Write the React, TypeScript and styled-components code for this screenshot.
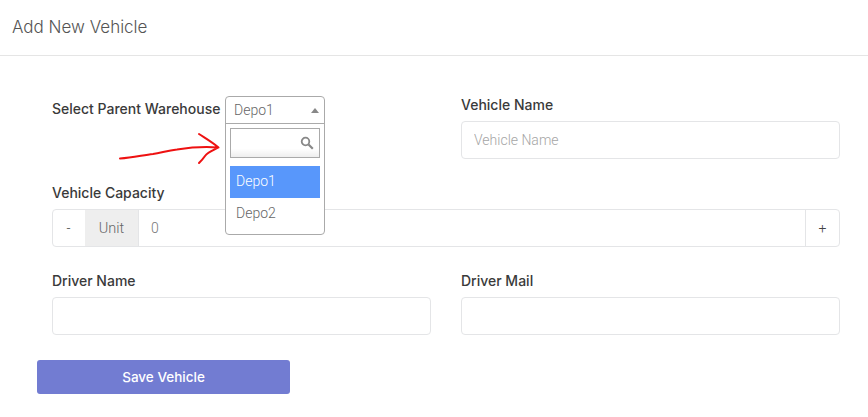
import React from 'react'
import styled, { createGlobalStyle } from 'styled-components'

const GlobalStyle = createGlobalStyle`
  html, body {
    margin: 0;
    padding: 0;
    background: #fff;
    font-family: Roboto, "Liberation Sans", sans-serif;
    color: #3a3a3a;
  }
`

const Page = styled.div`
  position: relative;
  width: 868px;
  height: 417px;
  overflow: hidden;
`

const Header = styled.header`
  height: 56px;
  box-sizing: border-box;
  border-bottom: 1px solid #e5e5e5;
  display: flex;
  align-items: center;
  padding: 0 0 2px 12px;
`

const Title = styled.h1`
  margin: 0;
  font-family: Inter, Roboto, sans-serif;
  font-size: 17px;
  font-weight: 300;
  color: #555;
`

const Form = styled.form`
  padding: 41px 28px 0 52px;
`

const Grid = styled.div`
  display: grid;
  grid-template-columns: 379px 379px;
  column-gap: 30px;
  row-gap: 26px;
`

const Field = styled.div<{ $wide?: boolean }>`
  display: flex;
  flex-direction: column;
  gap: 8px;
  ${({ $wide }) => ($wide ? 'grid-column: 1 / span 2;' : '')}
`

const InlineField = styled.div`
  display: flex;
  align-items: flex-start;
`

const Label = styled.label`
  display: block;
  font-family: Inter, Roboto, sans-serif;
  font-size: 14px;
  line-height: 16px;
  font-weight: 500;
  color: #3a3a3a;
`

const InlineLabel = styled(Label)`
  margin-top: 4px;
  width: 173px;
  white-space: nowrap;
`

const Input = styled.input`
  box-sizing: border-box;
  width: 100%;
  height: 38px;
  padding: 0 12px;
  border: 1px solid #e4e5e7;
  border-radius: 4px;
  background: #fff;
  font-family: Roboto, sans-serif;
  font-size: 14px;
  font-weight: 300;
  outline: none;

  &::placeholder {
    color: #a5a5a5;
    opacity: 1;
  }
`

const InputGroup = styled.div`
  display: flex;
  height: 38px;
  box-sizing: border-box;
  border: 1px solid #e4e5e7;
  border-radius: 4px;
  font-size: 14px;
`

const StepButton = styled.div<{ $end?: boolean }>`
  width: 33px;
  display: flex;
  align-items: center;
  justify-content: center;
  color: #444;
  font-weight: 300;
  ${({ $end }) => ($end ? 'border-left: 1px solid #e4e5e7;' : 'margin-right: -1px; padding-right: 2px; box-sizing: border-box;')}
`

const Addon = styled.div`
  width: 53px;
  display: flex;
  align-items: center;
  justify-content: center;
  background: #eeeeee;
  border-right: 1px solid #e4e5e7;
  color: #666;
  font-size: 14.5px;
  font-weight: 300;
`

const GroupValue = styled.div`
  flex: 1;
  display: flex;
  align-items: center;
  padding-left: 12px;
  color: #777;
  font-weight: 300;
`

const SelectAnchor = styled.div`
  position: relative;
  width: 100px;
  height: 28px;
  margin-top: -1px;
`

const Select = styled.div`
  position: absolute;
  top: 0;
  left: 0;
  z-index: 2;
  box-sizing: border-box;
  width: 100px;
  height: 139px;
  background: #fff;
  border: 1px solid #aaa;
  border-radius: 4px;
  font-size: 14px;
  color: #666;
  font-weight: 300;
`

const SelectHead = styled.div`
  height: 27px;
  box-sizing: border-box;
  border-bottom: 1px solid #aaa;
  display: flex;
  align-items: center;
  justify-content: space-between;
  padding: 0 5px 0 8px;
`

const Caret = styled.span`
  width: 0;
  height: 0;
  border-left: 4px solid transparent;
  border-right: 4px solid transparent;
  border-bottom: 5px solid #888;
`

const SearchBox = styled.div`
  box-sizing: border-box;
  height: 30px;
  margin: 4px 4px 8px;
  border: 1px solid #aaa;
  background: linear-gradient(#fff 70%, #eee);
  display: flex;
  align-items: center;
  justify-content: flex-end;
  padding-right: 5px;
`

const OptionList = styled.ul`
  margin: 0 4px;
  padding: 0;
  list-style: none;
`

const Option = styled.li<{ $active?: boolean }>`
  height: 32px;
  display: flex;
  align-items: center;
  padding: 0 0 2px 6px;
  box-sizing: border-box;
  background: ${({ $active }) => ($active ? '#5897fb' : 'transparent')};
  color: ${({ $active }) => ($active ? '#fff' : '#666')};
`

const Annotation = styled.svg`
  position: absolute;
  top: 130px;
  left: 115px;
  z-index: 3;
  pointer-events: none;
`

const SaveButton = styled.button`
  display: block;
  width: 253px;
  height: 34px;
  margin: 25px 0 0 -15px;
  border: none;
  border-radius: 3px;
  background: #727cd2;
  color: #fff;
  font-family: Inter, Roboto, sans-serif;
  font-size: 13.5px;
  font-weight: 500;
`

export default function App() {
  return (
    <Page>
      <GlobalStyle />
      <Header>
        <Title>Add New Vehicle</Title>
      </Header>
      <Form>
        <Grid>
          <InlineField>
            <InlineLabel>Select Parent Warehouse</InlineLabel>
            <SelectAnchor>
              <Select>
                <SelectHead>
                  Depo1
                  <Caret />
                </SelectHead>
                <SearchBox>
                  <svg width="14" height="14" viewBox="0 0 14 14">
                    <circle cx="5.5" cy="5.5" r="3.8" fill="none" stroke="#888" strokeWidth="1.8" />
                    <path d="M8.5 8.5L12.8 12.8" stroke="#888" strokeWidth="2.2" />
                  </svg>
                </SearchBox>
                <OptionList>
                  <Option $active>Depo1</Option>
                  <Option>Depo2</Option>
                </OptionList>
              </Select>
            </SelectAnchor>
          </InlineField>
          <Field>
            <Label>Vehicle Name</Label>
            <Input placeholder="Vehicle Name" />
          </Field>
          <Field $wide>
            <Label>Vehicle Capacity</Label>
            <InputGroup>
              <StepButton>-</StepButton>
              <Addon>Unit</Addon>
              <GroupValue>0</GroupValue>
              <StepButton $end>+</StepButton>
            </InputGroup>
          </Field>
          <Field>
            <Label>Driver Name</Label>
            <Input />
          </Field>
          <Field>
            <Label>Driver Mail</Label>
            <Input />
          </Field>
        </Grid>
        <SaveButton type="button">Save Vehicle</SaveButton>
      </Form>
      <Annotation width="110" height="40" viewBox="0 0 110 40">
        <path
          d="M5 28.5C18 28 28 25 38 24C46 23 52 20.5 62 19.5C75 17.5 90 16.5 103 17.5M84 4C90 8 97 12 103.5 17.5C99 20 93 22 90 26C88 29 86 31 84 33"
          fill="none"
          stroke="#ee1111"
          strokeWidth="2"
          strokeLinecap="round"
          strokeLinejoin="round"
        />
      </Annotation>
    </Page>
  )
}
